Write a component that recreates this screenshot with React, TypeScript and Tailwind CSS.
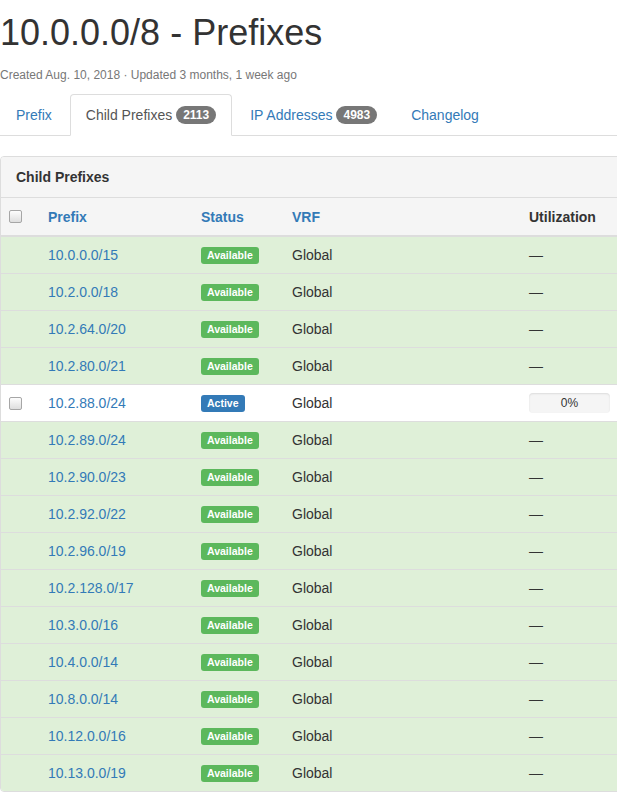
import React from "react";

type Row = { prefix: string; active?: boolean };

const rows: Row[] = [
  { prefix: "10.0.0.0/15" },
  { prefix: "10.2.0.0/18" },
  { prefix: "10.2.64.0/20" },
  { prefix: "10.2.80.0/21" },
  { prefix: "10.2.88.0/24", active: true },
  { prefix: "10.2.89.0/24" },
  { prefix: "10.2.90.0/23" },
  { prefix: "10.2.92.0/22" },
  { prefix: "10.2.96.0/19" },
  { prefix: "10.2.128.0/17" },
  { prefix: "10.3.0.0/16" },
  { prefix: "10.4.0.0/14" },
  { prefix: "10.8.0.0/14" },
  { prefix: "10.12.0.0/16" },
  { prefix: "10.13.0.0/19" },
];

function Checkbox() {
  return (
    <span className="inline-block w-[13px] h-[13px] rounded-[2px] border border-[#a6a6a6] bg-gradient-to-b from-[#fdfdfd] to-[#dedede]" />
  );
}

function Badge({ children }: { children: React.ReactNode }) {
  return (
    <span className="inline-block ml-[4px] px-[7px] py-[3px] rounded-[10px] bg-[#777] text-white text-[12px] font-bold leading-[12px] align-middle relative -top-px">
      {children}
    </span>
  );
}

const grid = "grid grid-cols-[39px_153px_91px_237px_1fr]";

export default function App() {
  return (
    <div className="w-[617px] h-[792px] overflow-hidden bg-white text-[#333] text-[14px] leading-[20px] font-['Liberation_Sans',Arial,sans-serif]">
      <h1 className="mt-[13px] text-[36px] leading-[40px] font-normal">10.0.0.0/8 - Prefixes</h1>
      <p className="mt-[12px] text-[12px] leading-[20px] text-[#777]">
        Created Aug. 10, 2018 · Updated 3 months, 1 week ago
      </p>
      <ul className="mt-[9px] flex border-b border-[#ddd]">
        <li className="-mb-px mr-[2px]">
          <span className="block px-[15px] py-[10px] border border-transparent rounded-t-[4px] text-[#337ab7]">Prefix</span>
        </li>
        <li className="-mb-px mr-[2px]">
          <span className="block px-[15px] py-[10px] border border-[#ddd] border-b-white bg-white rounded-t-[4px] text-[#555]">
            Child Prefixes<Badge>2113</Badge>
          </span>
        </li>
        <li className="-mb-px mr-[2px]">
          <span className="block px-[15px] py-[10px] border border-transparent rounded-t-[4px] text-[#337ab7]">
            IP Addresses<Badge>4983</Badge>
          </span>
        </li>
        <li className="-mb-px mr-[2px]">
          <span className="block px-[15px] py-[10px] border border-transparent rounded-t-[4px] text-[#337ab7]">Changelog</span>
        </li>
      </ul>

      <div className="mt-[20px] w-[680px] border border-[#ddd] rounded-[4px] overflow-hidden">
        <div className="bg-[#f5f5f5] px-[15px] py-[10px] border-b border-[#ddd] font-bold">Child Prefixes</div>
        <div className={`${grid} bg-[#f5f5f5] border-b-2 border-[#ddd] font-bold`}>
          <div className="h-[37px] px-[8px] flex items-center"><Checkbox /></div>
          <div className="h-[37px] px-[8px] pb-[8px] flex items-end text-[#337ab7]">Prefix</div>
          <div className="h-[37px] px-[8px] pb-[8px] flex items-end text-[#337ab7]">Status</div>
          <div className="h-[37px] px-[8px] pb-[8px] flex items-end text-[#337ab7]">VRF</div>
          <div className="h-[37px] px-[8px] pb-[8px] flex items-end">Utilization</div>
        </div>
        {rows.map((r, i) => (
          <div
            key={r.prefix}
            className={`${grid} ${i > 0 ? "border-t border-[#ddd]" : ""} ${r.active ? "bg-white" : "bg-[#dff0d8]"}`}
          >
            <div className="h-[36px] px-[8px] flex items-center">{r.active ? <Checkbox /> : null}</div>
            <div className="h-[36px] px-[8px] flex items-center text-[#337ab7]">{r.prefix}</div>
            <div className="h-[36px] px-[8px] flex items-center">
              {r.active ? (
                <span className="inline-block px-[6px] pt-[2px] pb-[3px] rounded-[3px] bg-[#337ab7] text-white text-[10.5px] font-bold leading-[12px]">Active</span>
              ) : (
                <span className="inline-block px-[6px] pt-[2px] pb-[3px] rounded-[3px] bg-[#5cb85c] text-white text-[10.5px] font-bold leading-[12px]">Available</span>
              )}
            </div>
            <div className="h-[36px] px-[8px] flex items-center">Global</div>
            <div className="h-[36px] px-[8px] flex items-center">
              {r.active ? (
                <div className="w-[81px] h-[20px] rounded-[4px] bg-[#f5f5f5] shadow-[inset_0_1px_2px_rgba(0,0,0,0.1)] text-center text-[12px] leading-[20px]">0%</div>
              ) : (
                <span>—</span>
              )}
            </div>
          </div>
        ))}
      </div>
    </div>
  );
}
